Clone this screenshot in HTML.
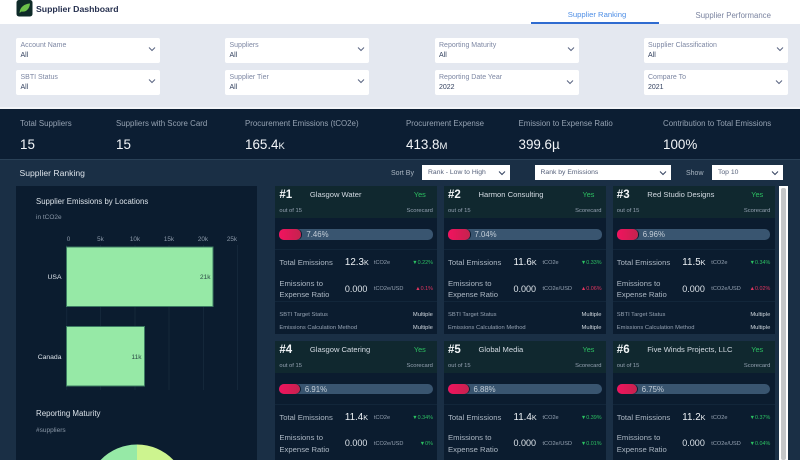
<!DOCTYPE html>
<html><head><meta charset="utf-8"><style>
*{box-sizing:border-box}
html,body{margin:0;padding:0;width:800px;height:460px;overflow:hidden}
body{background:#1a2f45;font-family:"Liberation Sans",sans-serif}
#w{position:absolute;left:0;top:0;width:800px;height:460px;overflow:hidden;background:#1a2f45;filter:blur(.3px)}
.t{position:absolute;white-space:nowrap;line-height:12px;height:12px}
.b{position:absolute}
.f{position:absolute;width:144px;height:25px;background:#fff;border-radius:2px}
.f .l{position:absolute;left:4.5px;top:3px;font-size:7px;line-height:9px;color:#7d87a3;white-space:nowrap}
.f .v{position:absolute;left:4.5px;top:12.5px;font-size:7px;line-height:9px;color:#33415f;white-space:nowrap}
.f svg{position:absolute;right:4px;top:8px}
.k{position:absolute;top:118px;font-size:7.9px;line-height:12px;color:#95a2b2;white-space:nowrap}
.n{position:absolute;top:135.5px;font-size:13.4px;line-height:18px;color:#f2f5f8;white-space:nowrap}
.n span{font-size:9.5px}
.d{position:absolute;top:165px;height:15px;background:#fff;font-size:6.8px;line-height:15px;color:#55607a;padding-left:6px;white-space:nowrap}
.d svg{position:absolute;right:4px;top:5px}
.c{position:absolute;width:162px;height:148px;overflow:hidden;background:#0b1c2f}
.c.z{height:119.2px}
.c .h{position:absolute;left:0;top:0;width:162px;height:32px;background:#10282f}
.c div{position:absolute;white-space:nowrap}
.r{left:4px;top:2px;font-size:11.5px;line-height:15px;font-weight:bold;color:#f2f5f7}
.m{left:34.5px;top:4px;font-size:7.6px;line-height:10px;color:#d3dae2}
.y{left:138.5px;top:4px;font-size:7.3px;line-height:10px;color:#2cc062}
.o{left:4px;top:21px;font-size:5.8px;line-height:8px;color:#95a2b2}
.s{right:4.5px;top:21px;font-size:5.8px;line-height:8px;color:#95a2b2}
.br{left:4px;top:43px;width:153.5px;height:10.5px;border-radius:5px;background:#395570}
.fl{left:4px;top:43px;height:10.5px;border-radius:5px;background:linear-gradient(90deg,#f2125f,#c5234e);box-shadow:1px 0 0 #0b1c2f}
.pc{top:44px;font-size:7.8px;line-height:9px;color:#c4ced8}
.ln{left:0;width:162px;height:1px;background:#12263a}
.te{left:4px;top:71px;font-size:7.7px;line-height:11px;color:#acb7c3}
.tv{left:69.5px;top:70px;font-size:9.8px;line-height:14px;color:#eef2f6}
.tv span{font-size:7.2px}
.tu{left:98.5px;top:73px;font-size:5.6px;line-height:8px;color:#95a2b2}
.td{right:4.5px;top:73px;font-size:5.4px;line-height:8px;color:#2cc062}
.e1{left:4px;top:91.5px;font-size:7.7px;line-height:11px;color:#acb7c3}
.e2{left:4px;top:103px;font-size:7.7px;line-height:11px;color:#acb7c3}
.ev{left:69.5px;top:96.5px;font-size:9px;line-height:13px;color:#dde3e9}
.eu{left:98.5px;top:99px;font-size:5.6px;line-height:8px;color:#95a2b2}
.ed{right:4.5px;top:99px;font-size:5.4px;line-height:8px;color:#e0355f}
.g{color:#2cc062!important}
.q1{left:4px;top:124.5px;font-size:5.8px;line-height:8px;color:#95a2b2}
.q2{left:4px;top:137.5px;font-size:5.8px;line-height:8px;color:#95a2b2}
.p1{right:4.5px;top:124.5px;font-size:5.8px;line-height:8px;color:#cfd6dd}
.p2{right:4.5px;top:137.5px;font-size:5.8px;line-height:8px;color:#cfd6dd}
</style></head><body><div id="w">

<div class="b" style="left:0;top:0;width:800px;height:24px;background:#fff"></div>
<div class="b" style="left:0;top:24px;width:800px;height:83px;background:#e4e8f0"></div>
<div class="b" style="left:0;top:107px;width:800px;height:2px;background:#f2f4f8"></div>
<div class="b" style="left:0;top:109px;width:800px;height:50px;background:#0c1e33"></div>
<div class="b" style="left:0;top:159px;width:800px;height:1px;background:#2a4157"></div>

<svg class="b" style="left:15.5px;top:0" width="17" height="17" viewBox="0 0 17 17"><rect x=".5" y="0" width="16" height="16.5" rx="2.5" fill="#0e2a28"/><path d="M3.5 13C4 7 8 4 14 3.5 13.5 9 10 12.5 5.5 11.5Z" fill="#6cc04a"/></svg>
<div class="t" style="left:36px;top:3px;font-size:8.7px;font-weight:bold;color:#26304f">Supplier Dashboard</div>
<div class="t" style="left:530px;top:9px;width:134px;text-align:center;font-size:7.7px;color:#4f8fe6">Supplier Ranking</div>
<div class="b" style="left:530.5px;top:22px;width:128px;height:2px;background:#2f6bd0"></div>
<div class="t" style="left:695.5px;top:9.5px;font-size:7.8px;color:#7b84a0">Supplier Performance</div>

<div class="f" style="left:16px;top:38px"><div class="l">Account Name</div><div class="v">All</div><svg width="8" height="6" viewBox="0 0 8 6"><path d="M1 1.5 4 4.5 7 1.5" fill="none" stroke="#5a6582" stroke-width="1"/></svg></div>
<div class="f" style="left:225px;top:38px"><div class="l">Suppliers</div><div class="v">All</div><svg width="8" height="6" viewBox="0 0 8 6"><path d="M1 1.5 4 4.5 7 1.5" fill="none" stroke="#5a6582" stroke-width="1"/></svg></div>
<div class="f" style="left:434.5px;top:38px"><div class="l">Reporting Maturity</div><div class="v">All</div><svg width="8" height="6" viewBox="0 0 8 6"><path d="M1 1.5 4 4.5 7 1.5" fill="none" stroke="#5a6582" stroke-width="1"/></svg></div>
<div class="f" style="left:643.5px;top:38px"><div class="l">Supplier Classification</div><div class="v">All</div><svg width="8" height="6" viewBox="0 0 8 6"><path d="M1 1.5 4 4.5 7 1.5" fill="none" stroke="#5a6582" stroke-width="1"/></svg></div>
<div class="f" style="left:16px;top:70px"><div class="l">SBTI Status</div><div class="v">All</div><svg width="8" height="6" viewBox="0 0 8 6"><path d="M1 1.5 4 4.5 7 1.5" fill="none" stroke="#5a6582" stroke-width="1"/></svg></div>
<div class="f" style="left:225px;top:70px"><div class="l">Supplier Tier</div><div class="v">All</div><svg width="8" height="6" viewBox="0 0 8 6"><path d="M1 1.5 4 4.5 7 1.5" fill="none" stroke="#5a6582" stroke-width="1"/></svg></div>
<div class="f" style="left:434.5px;top:70px"><div class="l">Reporting Date Year</div><div class="v" style="top:13px">2022</div><svg style="top:9px;right:5px" width="8" height="6" viewBox="0 0 8 6"><path d="M1 1.5 4 4.5 7 1.5" fill="none" stroke="#5a6582" stroke-width="1"/></svg></div>
<div class="f" style="left:643.5px;top:70px"><div class="l">Compare To</div><div class="v" style="top:13px">2021</div><svg style="top:9px;right:5px" width="8" height="6" viewBox="0 0 8 6"><path d="M1 1.5 4 4.5 7 1.5" fill="none" stroke="#5a6582" stroke-width="1"/></svg></div>

<div class="k" style="left:20px">Total Suppliers</div><div class="n" style="left:20px">15</div>
<div class="k" style="left:116px">Suppliers with Score Card</div><div class="n" style="left:116px">15</div>
<div class="k" style="left:245px">Procurement Emissions (tCO2e)</div><div class="n" style="left:245px">165.4<span>K</span></div>
<div class="k" style="left:406px">Procurement Expense</div><div class="n" style="left:406px">413.8<span>M</span></div>
<div class="k" style="left:518.5px">Emission to Expense Ratio</div><div class="n" style="left:518.5px">399.6µ</div>
<div class="k" style="left:663px">Contribution to Total Emissions</div><div class="n" style="left:663px">100%</div>

<div class="t" style="left:19.5px;top:167px;font-size:8.6px;color:#dbe2e9">Supplier Ranking</div>
<div class="t" style="left:391px;top:167.5px;font-size:7px;color:#aab6c2">Sort By</div>
<div class="d" style="left:422px;width:88px">Rank - Low to High<svg width="8" height="6" viewBox="0 0 8 6"><path d="M1 1.5 4 4.5 7 1.5" fill="none" stroke="#33415f" stroke-width="1"/></svg></div>
<div class="d" style="left:534.5px;width:136px">Rank by Emissions<svg width="8" height="6" viewBox="0 0 8 6"><path d="M1 1.5 4 4.5 7 1.5" fill="none" stroke="#33415f" stroke-width="1"/></svg></div>
<div class="t" style="left:686px;top:167.5px;font-size:7px;color:#aab6c2">Show</div>
<div class="d" style="left:712px;width:71px">Top 10<svg width="8" height="6" viewBox="0 0 8 6"><path d="M1 1.5 4 4.5 7 1.5" fill="none" stroke="#33415f" stroke-width="1"/></svg></div>

<div class="b" style="left:16px;top:186px;width:241px;height:274px;background:#0b1c2f"></div>
<div class="t" style="left:36px;top:195.5px;font-size:7.8px;color:#dbe2e9">Supplier Emissions by Locations</div>
<div class="t" style="left:36px;top:212px;font-size:6.5px;color:#8b98a8">in tCO2e</div>
<svg class="b" style="left:0;top:230px" width="270" height="170" viewBox="0 230 270 170">
<g stroke="#14273a" stroke-width="1"><path d="M66.7 245V390M100.5 245V390M135 245V390M169 245V390M203.5 245V390M237.5 245V390"/></g>
<rect x="66.5" y="247" width="146.5" height="59.5" fill="#96e9a6" stroke="#3c7a62" stroke-width="1"/>
<rect x="66.5" y="326.5" width="78" height="59.5" fill="#96e9a6" stroke="#3c7a62" stroke-width="1"/>
<g font-family="Liberation Sans" font-size="6.3" fill="#8b98a8" text-anchor="middle">
<text x="68.5" y="241">0</text><text x="100.5" y="241">5k</text><text x="135" y="241">10k</text><text x="169" y="241">15k</text><text x="203" y="241">20k</text><text x="232" y="241">25k</text></g>
<g font-family="Liberation Sans" font-size="6.8" fill="#dbe2e9" text-anchor="end"><text x="61.5" y="279">USA</text><text x="61.5" y="359">Canada</text></g>
<g font-family="Liberation Sans" font-size="6.5" fill="#2b4a45" text-anchor="end"><text x="210.5" y="279">21k</text><text x="141.5" y="359">11k</text></g>
</svg>
<div class="t" style="left:36px;top:408px;font-size:7.9px;color:#dbe2e9">Reporting Maturity</div>
<div class="t" style="left:36px;top:425px;font-size:6.5px;color:#8b98a8">#suppliers</div>
<svg class="b" style="left:80px;top:440px" width="120" height="20" viewBox="80 440 120 20"><path d="M137 460H100.6A50.5 50.5 0 0 1 137 444.5Z" fill="#96e9a6"/><path d="M137 444.5A50.5 50.5 0 0 1 173.4 460H137Z" fill="#cdf48f"/></svg>

<div class="c" style="left:275.4px;top:186px"><div class="h"></div><div class="r">#1</div><div class="m">Glasgow Water</div><div class="y">Yes</div><div class="o">out of 15</div><div class="s">Scorecard</div><div class="br"></div><div class="fl" style="width:22px"></div><div class="pc" style="left:31px">7.46%</div><div class="ln" style="top:63px"></div><div class="te">Total Emissions</div><div class="tv">12.3<span>K</span></div><div class="tu">tCO2e</div><div class="td">▼0.22%</div><div class="e1">Emissions to</div><div class="e2">Expense Ratio</div><div class="ev">0.000</div><div class="eu">tCO2e/USD</div><div class="ed">▲0.1%</div><div class="ln" style="top:115px"></div><div class="q1">SBTI Target Status</div><div class="p1">Multiple</div><div class="q2">Emissions Calculation Method</div><div class="p2">Multiple</div></div>

<div class="c" style="left:444px;top:186px"><div class="h"></div><div class="r">#2</div><div class="m">Harmon Consulting</div><div class="y">Yes</div><div class="o">out of 15</div><div class="s">Scorecard</div><div class="br"></div><div class="fl" style="width:21.5px"></div><div class="pc" style="left:30.5px">7.04%</div><div class="ln" style="top:63px"></div><div class="te">Total Emissions</div><div class="tv">11.6<span>K</span></div><div class="tu">tCO2e</div><div class="td">▼0.33%</div><div class="e1">Emissions to</div><div class="e2">Expense Ratio</div><div class="ev">0.000</div><div class="eu">tCO2e/USD</div><div class="ed">▲0.06%</div><div class="ln" style="top:115px"></div><div class="q1">SBTI Target Status</div><div class="p1">Multiple</div><div class="q2">Emissions Calculation Method</div><div class="p2">Multiple</div></div>

<div class="c" style="left:612.8px;top:186px"><div class="h"></div><div class="r">#3</div><div class="m">Red Studio Designs</div><div class="y">Yes</div><div class="o">out of 15</div><div class="s">Scorecard</div><div class="br"></div><div class="fl" style="width:21px"></div><div class="pc" style="left:30px">6.96%</div><div class="ln" style="top:63px"></div><div class="te">Total Emissions</div><div class="tv">11.5<span>K</span></div><div class="tu">tCO2e</div><div class="td">▼0.34%</div><div class="e1">Emissions to</div><div class="e2">Expense Ratio</div><div class="ev">0.000</div><div class="eu">tCO2e/USD</div><div class="ed">▲0.02%</div><div class="ln" style="top:115px"></div><div class="q1">SBTI Target Status</div><div class="p1">Multiple</div><div class="q2">Emissions Calculation Method</div><div class="p2">Multiple</div></div>

<div class="c z" style="left:275.4px;top:340.7px"><div class="h"></div><div class="r">#4</div><div class="m">Glasgow Catering</div><div class="y">Yes</div><div class="o">out of 15</div><div class="s">Scorecard</div><div class="br"></div><div class="fl" style="width:20.5px"></div><div class="pc" style="left:29.5px">6.91%</div><div class="ln" style="top:63px"></div><div class="te">Total Emissions</div><div class="tv">11.4<span>K</span></div><div class="tu">tCO2e</div><div class="td">▼0.34%</div><div class="e1">Emissions to</div><div class="e2">Expense Ratio</div><div class="ev">0.000</div><div class="eu">tCO2e/USD</div><div class="ed g">▼0%</div></div>

<div class="c z" style="left:444px;top:340.7px"><div class="h"></div><div class="r">#5</div><div class="m">Global Media</div><div class="y">Yes</div><div class="o">out of 15</div><div class="s">Scorecard</div><div class="br"></div><div class="fl" style="width:20.5px"></div><div class="pc" style="left:29.5px">6.88%</div><div class="ln" style="top:63px"></div><div class="te">Total Emissions</div><div class="tv">11.4<span>K</span></div><div class="tu">tCO2e</div><div class="td">▼0.39%</div><div class="e1">Emissions to</div><div class="e2">Expense Ratio</div><div class="ev">0.000</div><div class="eu">tCO2e/USD</div><div class="ed g">▼0.01%</div></div>

<div class="c z" style="left:612.8px;top:340.7px"><div class="h"></div><div class="r">#6</div><div class="m">Five Winds Projects, LLC</div><div class="y">Yes</div><div class="o">out of 15</div><div class="s">Scorecard</div><div class="br"></div><div class="fl" style="width:20px"></div><div class="pc" style="left:29px">6.75%</div><div class="ln" style="top:63px"></div><div class="te">Total Emissions</div><div class="tv">11.2<span>K</span></div><div class="tu">tCO2e</div><div class="td">▼0.37%</div><div class="e1">Emissions to</div><div class="e2">Expense Ratio</div><div class="ev">0.000</div><div class="eu">tCO2e/USD</div><div class="ed g">▼0.04%</div></div>

<div class="b" style="left:779px;top:186px;width:9px;height:274px;background:#fff"></div>
<div class="b" style="left:781px;top:188px;width:5px;height:272px;background:#c4c6c8;border-radius:2px"></div>
</div></body></html>
